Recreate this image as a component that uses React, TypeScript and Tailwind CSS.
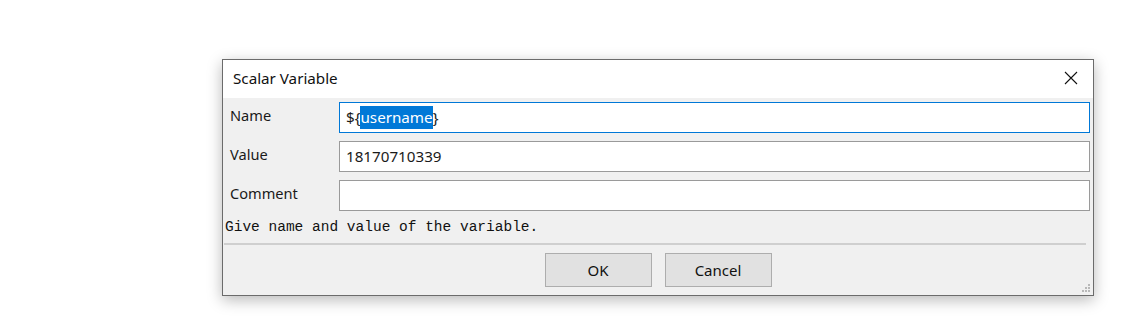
/**
 * Scalar Variable dialog
 * Windows-style modal with name / value / comment fields
 */

const ui = { fontFamily: '"Noto Sans", "Liberation Sans", sans-serif' };
const mono = { fontFamily: '"Liberation Mono", "DejaVu Sans Mono", monospace' };

function Field({ label, children, focused }: { label: string; children?: React.ReactNode; focused?: boolean }) {
  return (
    <div className="flex items-center">
      <div className="-mt-[3px] w-[116px] pl-[7px] text-[14.6px] text-[#1a1a1a]">{label}</div>
      <div
        className={
          focused
            ? 'flex h-[31px] flex-1 items-center border border-[#0078d7] bg-white px-[6px] text-[15.2px] text-[#1a1a1a]'
            : 'flex h-[31px] flex-1 items-center border border-[#9a9a9a] bg-white px-[6px] text-[15.2px] text-[#1a1a1a]'
        }
      >
        {children}
      </div>
    </div>
  );
}

export default function App() {
  return (
    <div className="h-[321px] w-[1123px] bg-white pl-[222px] pt-[59px]" style={ui}>
      <div className="flex h-[237px] w-[872px] flex-col border border-[#6b6b6b] bg-[#f0f0f0] shadow-[0_4px_14px_rgba(0,0,0,0.28)]">
        {/* Title bar */}
        <div className="flex h-[38px] items-center justify-between bg-white pb-[2px] pl-[10px] pr-[14px]">
          <span className="text-[15.2px] text-[#111]">Scalar Variable</span>
          <svg width="14" height="14" viewBox="0 0 14 14" className="mr-[1px]">
            <path d="M1 1L13 13M13 1L1 13" stroke="#111" strokeWidth="1.1" />
          </svg>
        </div>

        {/* Fields */}
        <div className="flex flex-col gap-[8px] pr-[3px] pt-[4px]">
          <Field label="Name" focused>
            <span>$&#123;</span>
            <span className="bg-[#0078d7] text-white">username</span>
            <span>&#125;</span>
          </Field>
          <Field label="Value">18170710339</Field>
          <Field label="Comment" />
        </div>

        <div className="pl-[2px] pt-[6px] text-[14.5px] leading-[20px] text-[#111]" style={mono}>
          Give name and value of the variable.
        </div>

        <div className="mx-[1px] mr-[7px] mt-[6px] h-[2px] bg-[#cfcfcf]" />

        {/* Buttons */}
        <div className="relative flex flex-1 justify-center gap-[13px] pt-[8px]">
          <button className="h-[34px] w-[107px] border border-[#adadad] bg-[#e1e1e1] text-[15px] text-[#111]">OK</button>
          <button className="h-[34px] w-[107px] border border-[#adadad] bg-[#e1e1e1] text-[15px] text-[#111]">Cancel</button>
          <svg width="10" height="10" viewBox="0 0 10 10" className="absolute bottom-[2px] right-[2px]">
            <rect x="7" y="1" width="2" height="2" fill="#b8b8b8" />
            <rect x="4" y="4" width="2" height="2" fill="#b8b8b8" />
            <rect x="7" y="4" width="2" height="2" fill="#b8b8b8" />
            <rect x="1" y="7" width="2" height="2" fill="#b8b8b8" />
            <rect x="4" y="7" width="2" height="2" fill="#b8b8b8" />
            <rect x="7" y="7" width="2" height="2" fill="#b8b8b8" />
          </svg>
        </div>
      </div>
    </div>
  );
}
